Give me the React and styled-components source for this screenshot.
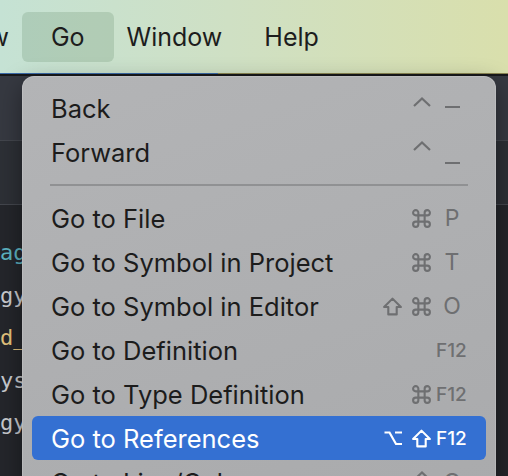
import React from 'react'
import styled, { createGlobalStyle } from 'styled-components'

const GlobalStyle = createGlobalStyle`
  html, body {
    margin: 0;
    padding: 0;
    background: #24262b;
    overflow: hidden;
  }
  #root {
    width: 508px;
    height: 476px;
    position: relative;
    overflow: hidden;
  }
`

const MenuBar = styled.div`
  height: 73px;
  display: flex;
  align-items: center;
  background: linear-gradient(90deg, #c5e2d4 0%, #cfe0c4 45%, #d9dfac 100%);
  font-family: Inter, "Liberation Sans", sans-serif;
  font-size: 25px;
  color: #1d1d1d;
  overflow: hidden;
`

const BarItem = styled.div`
  flex: none;
  height: 50px;
  display: flex;
  align-items: center;
  padding: 0 ${p => (p.active ? 29 : 21)}px;
  margin: 0 ${p => (p.active ? -8 : 0)}px;
  border-radius: 6px;
  background: ${p => (p.active ? 'rgba(90, 130, 95, 0.22)' : 'transparent')};
  &:first-child {
    margin-left: -70px;
  }
`

const BarEdge = styled.div`
  height: 1px;
  background: linear-gradient(90deg, #3a6aa8 0%, #3a6aa8 43%, #8a8552 43%, #8a8552 100%);
`

const BarShadow = styled.div`
  height: 2px;
  background: #17181b;
`

const Stripe = styled.div`
  height: ${p => p.h}px;
  background: ${p => p.bg};
  border-bottom: 1px solid #43464d;
`

const CodeArea = styled.div`
  padding-top: 27px;
  background: #24262b;
  font-family: "DejaVu Sans Mono", monospace;
  font-size: 22px;
  height: 300px;
`

const CodeLine = styled.div`
  height: 42.5px;
  line-height: 42.5px;
  white-space: pre;
  color: ${p => p.color};
`

const Menu = styled.div`
  position: absolute;
  top: 76px;
  left: 22px;
  width: 474px;
  padding: 10px 0;
  border-radius: 12px;
  background: linear-gradient(160deg, #b3b4b6 0%, #adaeb0 60%, #a9aaac 100%);
  box-shadow: 0 0 0 1px rgba(255, 255, 255, 0.15) inset, 0 8px 24px rgba(0, 0, 0, 0.4);
  font-family: Inter, "Liberation Sans", sans-serif;
`

const Item = styled.div`
  height: 44px;
  margin: 0 10px;
  padding: 0 18px 0 19px;
  display: flex;
  align-items: center;
  justify-content: space-between;
  border-radius: 6px;
  font-size: 25.5px;
  color: ${p => (p.active ? '#ffffff' : '#1c1c1c')};
  background: ${p => (p.active ? '#3470d2' : 'transparent')};
`

const Separator = styled.div`
  height: 22px;
  margin: 0 28px 0 28px;
  display: flex;
  align-items: center;
  &::after {
    content: '';
    flex: 1;
    height: 2px;
    background: #909193;
  }
`

const Shortcut = styled.div`
  display: flex;
  align-items: center;
  color: ${p => (p.active ? '#ffffff' : '#6e6f71')};
`

const Mods = styled.div`
  display: flex;
  align-items: center;
  gap: 8px;
  margin-right: 4px;
`

const Key = styled.div`
  width: 32px;
  text-align: ${p => (p.small ? 'left' : 'center')};
  font-size: ${p => (p.small ? 19 : 23)}px;
  font-weight: ${p => (p.small ? 500 : 400)};
  line-height: 1;
`

const Dash = styled.div`
  width: 15px;
  height: 2.5px;
  margin: 0 auto;
  background: currentColor;
  transform: translateY(${p => p.dy || 0}px);
`

const ModIcon = styled.svg`
  display: block;
  transform: translateY(${p => p.dy || 0}px);
`

const Cmd = () => (
  <ModIcon width="21" height="21" viewBox="0 0 20 20" fill="none" stroke="currentColor" strokeWidth="2">
    <path d="M7 7H13V13H7Z M7 7H4.5A2.5 2.5 0 1 1 7 4.5V7 M13 7V4.5A2.5 2.5 0 1 1 15.5 7H13 M13 13H15.5A2.5 2.5 0 1 1 13 15.5V13 M7 13V15.5A2.5 2.5 0 1 1 4.5 13H7" />
  </ModIcon>
)

const Shift = () => (
  <ModIcon width="21" height="21" viewBox="0 0 20 20" fill="none" stroke="currentColor" strokeWidth="2" strokeLinejoin="round">
    <path d="M10 2.5L18 10.5H14V17.5H6V10.5H2Z" />
  </ModIcon>
)

const Opt = () => (
  <ModIcon width="20" height="20" viewBox="0 0 20 20" fill="none" stroke="currentColor" strokeWidth="2.2">
    <path d="M1.5 4.5H6.5L13 16H19 M12 4.5H19" />
  </ModIcon>
)

const Ctrl = () => (
  <ModIcon width="20" height="20" viewBox="0 0 20 20" fill="none" stroke="currentColor" strokeWidth="2.2" dy={-4}>
    <path d="M2 12L10 4.5L18 12" />
  </ModIcon>
)

const icons = { ctrl: Ctrl, cmd: Cmd, shift: Shift, opt: Opt }

const MenuItem = ({ label, mods = [], keyLabel, dash, dashDy, small, active }) => (
  <Item active={active}>
    <span>{label}</span>
    {(keyLabel || dash) && (
      <Shortcut active={active}>
        <Mods>
          {mods.map((m, i) => {
            const Icon = icons[m]
            return <Icon key={i} />
          })}
        </Mods>
        <Key small={small}>
          {dash ? <Dash dy={dashDy} /> : keyLabel}
        </Key>
      </Shortcut>
    )}
  </Item>
)

const codeLines = [
  { text: 'ag', color: '#5db4c2' },
  { text: 'gy', color: '#c9cbcf' },
  { text: 'd_', color: '#e2c27c' },
  { text: 'ys', color: '#c9cbcf' },
  { text: 'gy', color: '#c9cbcf' },
]

const App = () => {
  return (
    <>
      <GlobalStyle />
      <MenuBar>
        <BarItem>View</BarItem>
        <BarItem active>Go</BarItem>
        <BarItem>Window</BarItem>
        <BarItem>Help</BarItem>
      </MenuBar>
      <BarEdge />
      <BarShadow />
      <Stripe h={64} bg="#363941" />
      <Stripe h={63} bg="#2d3036" />
      <CodeArea>
        {codeLines.map((l, i) => (
          <CodeLine key={i} color={l.color}>{l.text}</CodeLine>
        ))}
      </CodeArea>

      <Menu>
        <MenuItem label="Back" mods={['ctrl']} dash dashDy={-1} />
        <MenuItem label="Forward" mods={['ctrl']} dash dashDy={11} />
        <Separator />
        <MenuItem label="Go to File" mods={['cmd']} keyLabel="P" />
        <MenuItem label="Go to Symbol in Project" mods={['cmd']} keyLabel="T" />
        <MenuItem label="Go to Symbol in Editor" mods={['shift', 'cmd']} keyLabel="O" />
        <MenuItem label="Go to Definition" keyLabel="F12" small />
        <MenuItem label="Go to Type Definition" mods={['cmd']} keyLabel="F12" small />
        <MenuItem label="Go to References" mods={['opt', 'shift']} keyLabel="F12" small active />
        <MenuItem label="Go to Line/Column..." mods={['ctrl']} keyLabel="G" />
      </Menu>
    </>
  )
}

export default App
